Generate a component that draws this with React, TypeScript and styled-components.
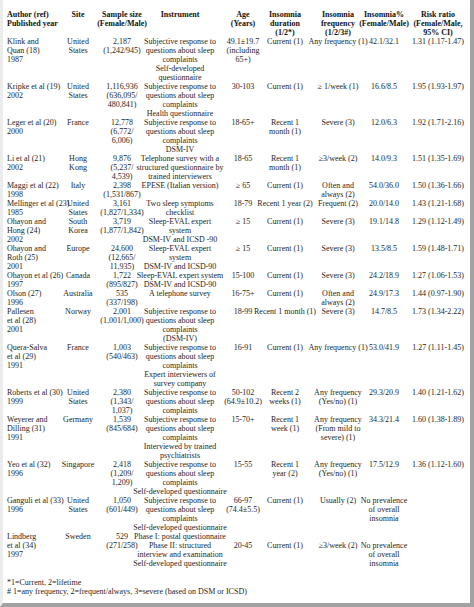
import styled, { createGlobalStyle } from "styled-components";

const GlobalStyle = createGlobalStyle`
  body {
    margin: 0;
    background: #ffffff;
  }
`;

const Sheet = styled.div`
  width: 474px;
  height: 607px;
  box-sizing: border-box;
  background: #ffffff;
  border-left: 3px solid #ececec;
  border-right: 4px solid #a2a2a2;
  border-bottom: 4px solid #a2a2a2;
  padding-top: 10px;
  overflow: hidden;
  font-family: "Liberation Serif", "Times New Roman", serif;
  font-size: 8px;
  line-height: 9px;
  color: #262626;
`;

const Row = styled.div<{ $head?: boolean }>`
  display: grid;
  grid-template-columns: 43px 64px 24px 92px 34px 50px 56px 36px 72px;
  font-weight: ${(p) => (p.$head ? 700 : 400)};
  color: ${(p) => (p.$head ? "#111" : "#262626")};
`;

const Cell = styled.div<{ $left?: boolean }>`
  display: flex;
  flex-direction: column;
  align-items: ${(p) => (p.$left ? "flex-start" : "center")};
  padding-left: ${(p) => (p.$left ? "4px" : "0")};
  white-space: nowrap;
  min-width: 0;
`;

const Line = styled.span`
  display: block;
`;

const Notes = styled.div`
  padding: 10px 0 0 4px;
  white-space: nowrap;
`;

const header = [
  "Author (ref)\nPublished year",
  "Site",
  "Sample size\n(Female/Male)",
  "Instrument",
  "Age\n(Years)",
  "Insomnia\nduration\n(1/2*)",
  "Insomnia\nfrequency\n(1/2/3#)",
  "Insomnia%\n(Female/Male)",
  "Risk ratio\n(Female/Male,\n95% CI)",
];

const subj = "Subjective response to\nquestions about sleep\ncomplaints";

const rows: string[][] = [
  ["Klink and\nQuan (18)\n1987", "United\nStates", "2,187\n(1,242/945)", subj + "\nSelf-developed\nquestionnaire", "49.1±19.7\n(including\n65+)", "Current (1)", "Any frequency (1)", "42.1/32.1", "1.31 (1.17-1.47)"],
  ["Kripke et al (19)\n2002", "United\nStates", "1,116,936\n(636,095/\n480,841)", subj + "\nHealth questionnaire", "30-103", "Current (1)", "≥ 1/week (1)", "16.6/8.5", "1.95 (1.93-1.97)"],
  ["Leger et al (20)\n2000", "France", "12,778\n(6,772/\n6,006)", subj + "\nDSM-IV", "18-65+", "Recent 1\nmonth (1)", "Severe (3)", "12.0/6.3", "1.92 (1.71-2.16)"],
  ["Li et al (21)\n2002", "Hong\nKong", "9,876\n(5,237/\n4,539)", "Telephone survey with a\nstructured questionnaire by\ntrained interviewers", "18-65", "Recent 1\nmonth (1)", "≥3/week (2)", "14.0/9.3", "1.51 (1.35-1.69)"],
  ["Maggi et al (22)\n1998", "Italy", "2,398\n(1,531/867)", "EPESE (Italian version)", "≥ 65", "Current (1)", "Often and\nalways (2)", "54.0/36.0", "1.50 (1.36-1.66)"],
  ["Mellinger et al (23)\n1985", "United\nStates", "3,161\n(1,827/1,334)", "Two sleep symptoms\nchecklist", "18-79", "Recent 1 year (2)", "Frequent (2)", "20.0/14.0", "1.43 (1.21-1.68)"],
  ["Ohayon and\nHong (24)\n2002", "South\nKorea", "3,719\n(1,877/1,842)", "Sleep-EVAL expert\nsystem\nDSM-IV and ICSD -90", "≥ 15", "Current (1)", "Severe (3)", "19.1/14.8", "1.29 (1.12-1.49)"],
  ["Ohayon and\nRoth (25)\n2001", "Europe", "24,600\n(12,665/\n11,935)", "Sleep-EVAL expert\nsystem\nDSM-IV and ICSD-90", "≥ 15", "Current (1)", "Severe (3)", "13.5/8.5", "1.59 (1.48-1.71)"],
  ["Ohayon et al (26)\n1997", "Canada", "1,722\n(895/827)", "Sleep-EVAL expert system\nDSM-IV and ICSD-90", "15-100", "Current (1)", "Severe (3)", "24.2/18.9", "1.27 (1.06-1.53)"],
  ["Olson (27)\n1996", "Australia", "535\n(337/198)", "A telephone survey", "16-75+", "Current (1)", "Often and\nalways (2)", "24.9/17.3", "1.44 (0.97-1.90)"],
  ["Pallesen\net al (28)\n2001", "Norway", "2,001\n(1,001/1,000)", subj + "\n(DSM-IV)", "18-99", "Recent 1 month (1)", "Severe (3)", "14.7/8.5", "1.73 (1.34-2.22)"],
  ["Quera-Salva\net al (29)\n1991", "France", "1,003\n(540/463)", subj + "\nExpert interviewers of\nsurvey company", "16-91", "Current (1)", "Any frequency (1)", "53.0/41.9", "1.27 (1.11-1.45)"],
  ["Roberts et al (30)\n1999", "United\nStates", "2,380\n(1,343/\n1,037)", subj, "50-102\n(64.9±10.2)", "Recent 2\nweeks (1)", "Any frequency\n(Yes/no) (1)", "29.3/20.9", "1.40 (1.21-1.62)"],
  ["Weyerer and\nDilling (31)\n1991", "Germany", "1,539\n(845/684)", subj + "\nInterviewed by trained\npsychiatrists", "15-70+", "Recent 1\nweek (1)", "Any frequency\n(From mild to\nsevere) (1)", "34.3/21.4", "1.60 (1.38-1.89)"],
  ["Yeo et al (32)\n1996", "Singapore", "2,418\n(1,209/\n1,209)", subj + "\nSelf-developed questionnaire", "15-55", "Recent 1\nyear (2)", "Any frequency\n(Yes/no) (1)", "17.5/12.9", "1.36 (1.12-1.60)"],
  ["Ganguli et al (33)\n1996", "United\nStates", "1,050\n(601/449)", subj + "\nSelf-developed questionnaire", "66-97\n(74.4±5.5)", "Current (1)", "Usually (2)", "No prevalence\nof overall\ninsomnia", ""],
  ["Lindberg\net al (34)\n1997", "Sweden", "529\n(271/258)", "Phase I: postal questionnaire\nPhase II: structured\ninterview and examination\nSelf-developed questionnaire", "\n20-45", "\nCurrent (1)", "\n≥3/week (2)", "\nNo prevalence\nof overall\ninsomnia", ""],
];

function TableRow({ cells, head }: { cells: string[]; head?: boolean }) {
  return (
    <Row $head={head}>
      {cells.map((text, i) => (
        <Cell key={i} $left={i === 0}>
          {text.split("\n").map((line, j) => (
            <Line key={j}>{line || "\u00a0"}</Line>
          ))}
        </Cell>
      ))}
    </Row>
  );
}

export default function App() {
  return (
    <>
      <GlobalStyle />
      <Sheet>
        <TableRow cells={header} head />
        {rows.map((r, i) => (
          <TableRow key={i} cells={r} />
        ))}
        <Notes>
          *1=Current, 2=lifetime
          <br />
          # 1=any frequency, 2=frequent/always, 3=severe (based on DSM or ICSD)
        </Notes>
      </Sheet>
    </>
  );
}
